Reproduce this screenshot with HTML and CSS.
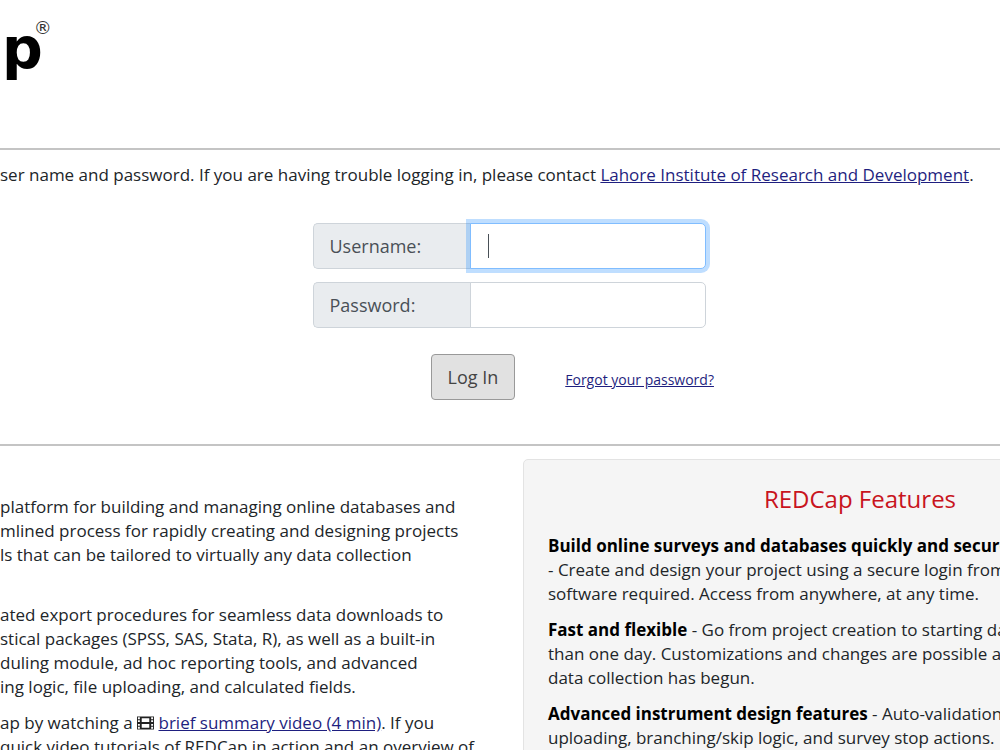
FILE: index.html
```
<!DOCTYPE html>
<html lang="en">
<head>
    <meta charset="UTF-8">
    <meta name="viewport" content="width=device-width, initial-scale=1.0">
    <title>REDCap</title>
    <link rel="stylesheet" href="styles.css">
</head>
<body>
    <header class="header">
        <div class="logo">p<sup>®</sup></div>
    </header>

    <section class="login">
        <p class="intro">ser name and password. If you are having trouble logging in, please contact <a href="#">Lahore Institute of Research and Development</a>.</p>

        <form class="login-form">
            <div class="input-group">
                <label for="username">Username:</label>
                <div class="field active">
                    <input type="text" id="username" name="username">
                </div>
            </div>
            <div class="input-group">
                <label for="password">Password:</label>
                <div class="field">
                    <input type="password" id="password" name="password">
                </div>
            </div>
            <div class="actions">
                <button type="submit">Log In</button>
                <a href="#">Forgot your password?</a>
            </div>
        </form>
    </section>

    <main class="columns">
        <div class="about">
            <p>platform for building and managing online databases and<br>
            mlined process for rapidly creating and designing projects<br>
            ls that can be tailored to virtually any data collection<br>
            &nbsp;</p>

            <p>ated export procedures for seamless data downloads to<br>
            stical packages (SPSS, SAS, Stata, R), as well as a built-in<br>
            duling module, ad hoc reporting tools, and advanced<br>
            ing logic, file uploading, and calculated fields.</p>

            <p>ap by watching a
            <svg class="film" viewBox="0 0 18 14" aria-hidden="true">
                <path fill="#222" fill-rule="evenodd" d="M0 0h18v14H0zM5 2v4h8V2zM5 8v4h8V8zM1 1v2h2V1zM1 4v2h2V4zM1 8v2h2V8zM1 11v2h2v-2zM15 1v2h2V1zM15 4v2h2V4zM15 8v2h2V8zM15 11v2h2v-2z"/>
            </svg>
            <a href="#">brief summary video (4 min)</a>. If you<br>
            quick video tutorials of REDCap in action and an overview of</p>
        </div>

        <div class="features">
            <h2>REDCap Features</h2>
            <p><b>Build online surveys and databases quickly and securely</b><br>
            - Create and design your project using a secure login from<br>
            software required. Access from anywhere, at any time.</p>

            <p><b>Fast and flexible</b> - Go from project creation to starting data<br>
            than one day. Customizations and changes are possible any<br>
            data collection has begun.</p>

            <p><b>Advanced instrument design features</b> - Auto-validation,<br>
            uploading, branching/skip logic, and survey stop actions.</p>
        </div>
    </main>
</body>
</html>
```
FILE: styles.css
```
* {
    box-sizing: border-box;
}
html {
    height: 100%;
    overflow: hidden;
}
body {
    height: 100%;
    margin: 0;
    overflow: hidden;
    background: #fff;
    color: #212529;
    font-family: "Open Sans", sans-serif;
    font-size: 17px;
    line-height: 24px;
}
a {
    color: #1f1f80;
    text-decoration: underline;
}
p {
    margin: 0 0 12px;
    white-space: nowrap;
}

.header {
    height: 150px;
    padding: 2px;
    border-bottom: 2px solid #c4c4c4;
}
.logo {
    display: flex;
    align-items: flex-start;
    color: #000;
    font-family: "DejaVu Sans", sans-serif;
    font-size: 57px;
    font-weight: bold;
    line-height: 92px;
}
.logo sup {
    margin: 14px 0 0 -9px;
    color: #333;
    font-family: "DejaVu Sans", sans-serif;
    font-size: 18px;
    font-weight: normal;
    line-height: 24px;
}

.login {
    padding: 13px 0 44px;
    border-bottom: 2px solid #c4c4c4;
}
.intro {
    margin-bottom: 36px;
}
.login-form {
    width: 411px;
    margin: 0 auto;
    padding-left: 18px;
    font-size: 18px;
}
.input-group {
    display: flex;
    height: 46px;
    margin-bottom: 13px;
}
.input-group label {
    width: 158px;
    padding: 10px 16px;
    border: 1px solid #ced4da;
    border-right: 0;
    border-radius: 5px 0 0 5px;
    background: #e9ecef;
    color: #495057;
}
.field {
    position: relative;
    flex: 1;
    margin-left: -1px;
}
.field input {
    width: 100%;
    height: 100%;
    padding: 0 16px;
    border: 1px solid #ced4da;
    border-radius: 0 5px 5px 0;
    background: #fff;
    color: #495057;
    font: inherit;
    outline: none;
}
.field.active input {
    border-color: #80bdff;
    box-shadow: 0 0 0 4px rgba(0, 123, 255, .25);
}
/* text cursor */
.field.active::after {
    content: "";
    position: absolute;
    top: 11px;
    left: 18px;
    width: 1px;
    height: 24px;
    background: #495057;
}
.actions {
    display: flex;
    align-items: center;
    gap: 50px;
    margin: 26px 0 0 118px;
    white-space: nowrap;
}
.actions button {
    height: 46px;
    padding: 0 16px;
    border: 1px solid #999;
    border-radius: 4px;
    background: #e1e1e1;
    color: #444;
    font: inherit;
}
.actions a {
    padding-top: 6px;
    font-size: 14px;
}

.columns {
    display: grid;
    grid-template-columns: 523px 674px;
    padding-top: 13px;
}
.about {
    padding-top: 36px;
}
.film {
    width: 17px;
    height: 14px;
    vertical-align: -1px;
}
.features {
    padding: 24px;
    border: 1px solid #e3e3e3;
    border-radius: 5px;
    background: #f5f5f5;
}
.features h2 {
    margin: 0 0 20px;
    color: #c8141d;
    font-size: 24px;
    font-weight: normal;
    line-height: 30px;
    text-align: center;
}
.features b {
    color: #000;
}
```
